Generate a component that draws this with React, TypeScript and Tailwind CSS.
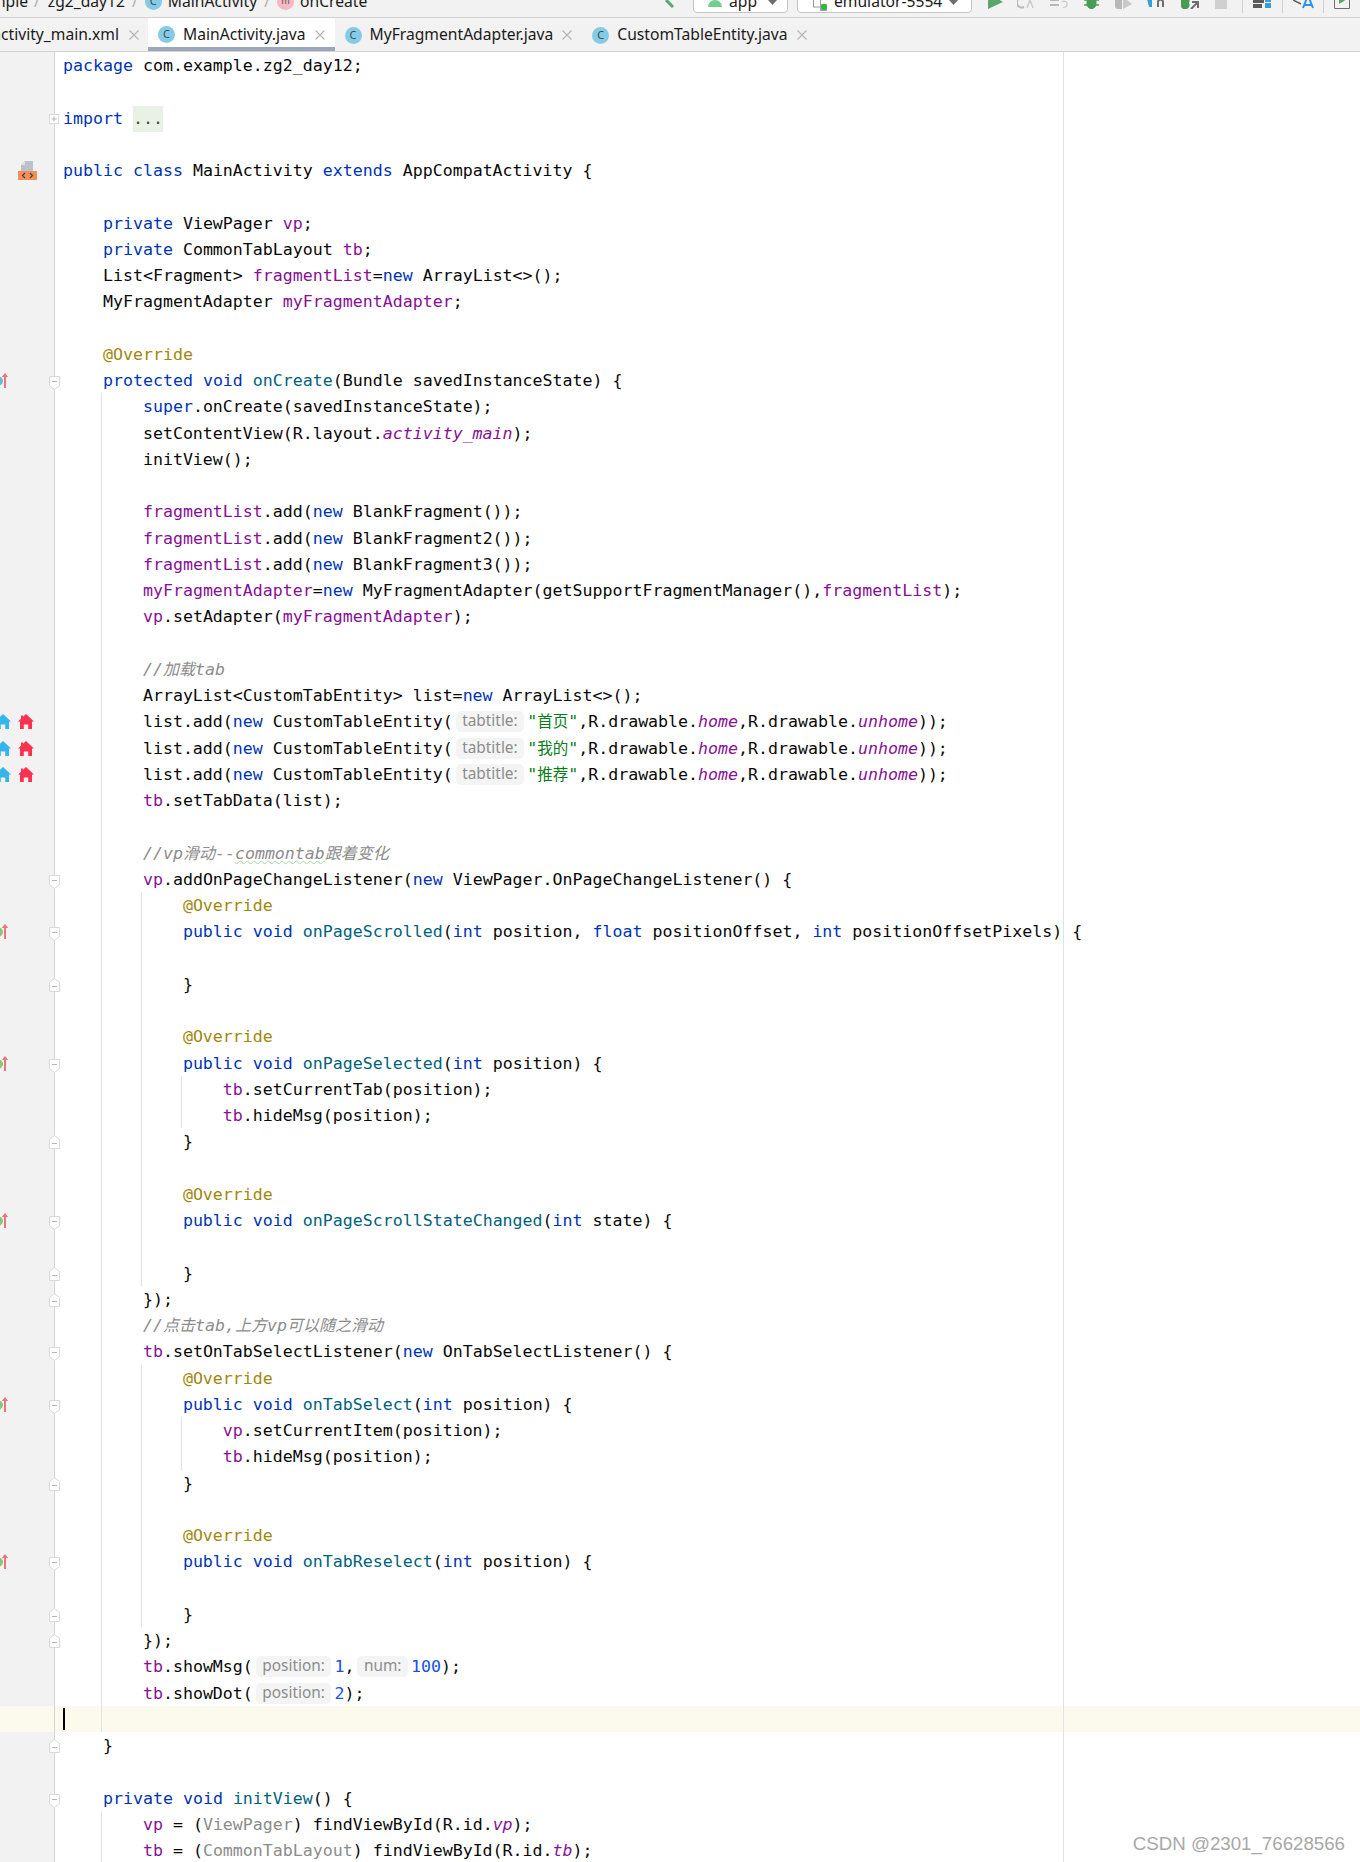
import React from "react";

const CODE: string[] = [
  "{k|package} com.example.zg2_day12;",
  "",
  "{k|import} {d|...}",
  "",
  "{k|public} {k|class} MainActivity {k|extends} AppCompatActivity {",
  "",
  "    {k|private} ViewPager {f|vp};",
  "    {k|private} CommonTabLayout {f|tb};",
  "    List<Fragment> {f|fragmentList}={k|new} ArrayList<>();",
  "    MyFragmentAdapter {f|myFragmentAdapter};",
  "",
  "    {a|@Override}",
  "    {k|protected} {k|void} {m|onCreate}(Bundle savedInstanceState) {",
  "        {k|super}.onCreate(savedInstanceState);",
  "        setContentView(R.layout.{fi|activity_main});",
  "        initView();",
  "",
  "        {f|fragmentList}.add({k|new} BlankFragment());",
  "        {f|fragmentList}.add({k|new} BlankFragment2());",
  "        {f|fragmentList}.add({k|new} BlankFragment3());",
  "        {f|myFragmentAdapter}={k|new} MyFragmentAdapter(getSupportFragmentManager(),{f|fragmentList});",
  "        {f|vp}.setAdapter({f|myFragmentAdapter});",
  "",
  "        {c|//}{cc|加载}{c|tab}",
  "        ArrayList<CustomTabEntity> list={k|new} ArrayList<>();",
  '        list.add({k|new} CustomTableEntity({h|tabtitle:}{s|"}{sc|首页}{s|"},R.drawable.{fi|home},R.drawable.{fi|unhome}));',
  '        list.add({k|new} CustomTableEntity({h|tabtitle:}{s|"}{sc|我的}{s|"},R.drawable.{fi|home},R.drawable.{fi|unhome}));',
  '        list.add({k|new} CustomTableEntity({h|tabtitle:}{s|"}{sc|推荐}{s|"},R.drawable.{fi|home},R.drawable.{fi|unhome}));',
  "        {f|tb}.setTabData(list);",
  "",
  "        {c|//vp}{cc|滑动}{c|--}{w|commontab}{cc|跟着变化}",
  "        {f|vp}.addOnPageChangeListener({k|new} ViewPager.OnPageChangeListener() {",
  "            {a|@Override}",
  "            {k|public} {k|void} {m|onPageScrolled}({k|int} position, {k|float} positionOffset, {k|int} positionOffsetPixels) {",
  "",
  "            }",
  "",
  "            {a|@Override}",
  "            {k|public} {k|void} {m|onPageSelected}({k|int} position) {",
  "                {f|tb}.setCurrentTab(position);",
  "                {f|tb}.hideMsg(position);",
  "            }",
  "",
  "            {a|@Override}",
  "            {k|public} {k|void} {m|onPageScrollStateChanged}({k|int} state) {",
  "",
  "            }",
  "        });",
  "        {c|//}{cc|点击}{c|tab,}{cc|上方}{c|vp}{cc|可以随之滑动}",
  "        {f|tb}.setOnTabSelectListener({k|new} OnTabSelectListener() {",
  "            {a|@Override}",
  "            {k|public} {k|void} {m|onTabSelect}({k|int} position) {",
  "                {f|vp}.setCurrentItem(position);",
  "                {f|tb}.hideMsg(position);",
  "            }",
  "",
  "            {a|@Override}",
  "            {k|public} {k|void} {m|onTabReselect}({k|int} position) {",
  "",
  "            }",
  "        });",
  "        {f|tb}.showMsg({h|position:}{n|1},{h|num:}{n|100});",
  "        {f|tb}.showDot({h|position:}{n|2});",
  "",
  "    }",
  "",
  "    {k|private} {k|void} {m|initView}() {",
  "        {f|vp} = ({g|ViewPager}) findViewById(R.id.{fi|vp});",
  "        {f|tb} = ({g|CommonTabLayout}) findViewById(R.id.{fi|tb});",
];

const FOLD_OPEN = [13, 32, 34, 39, 45, 50, 52, 58, 67];
const FOLD_END = [36, 42, 47, 48, 55, 60, 61, 65];
const OVERRIDE = [13, 34, 39, 45, 52, 58];
const HOME = [26, 27, 28];

function inRange(n: number, ranges: number[][]) {
  return ranges.some(([a, b]) => n >= a && n <= b);
}

function Token({ type, text }: { type: string; text: string }) {
  switch (type) {
    case "k":
      return <span className="text-[#0033b3]">{text}</span>;
    case "m":
      return <span className="text-[#00627a]">{text}</span>;
    case "f":
      return <span className="text-[#871094]">{text}</span>;
    case "fi":
      return <span className="text-[#871094] italic">{text}</span>;
    case "a":
      return <span className="text-[#9e880d]">{text}</span>;
    case "s":
      return <span className="text-[#067d17]">{text}</span>;
    case "sc":
      return <span className="text-[#067d17] text-[15.5px]">{text}</span>;
    case "n":
      return <span className="text-[#1750eb]">{text}</span>;
    case "c":
      return <span className="text-[#8c8c8c] italic">{text}</span>;
    case "cc":
      return <span className="text-[#8c8c8c] italic text-[16px]">{text}</span>;
    case "w":
      return (
        <span className="text-[#8c8c8c] italic underline decoration-wavy decoration-[#a9d5a9] decoration-1">{text}</span>
      );
    case "g":
      return <span className="text-[#8c8c8c]">{text}</span>;
    case "d":
      return <span className="inline-block bg-[#e8f2e4] text-[#444444] h-[26px]">{text}</span>;
    case "h":
      return (
        <span className="inline-block h-[21px] leading-[20px] align-[1px] mx-[3px] px-[6.5px] rounded-[5px] bg-[#f4f4f4] text-[#8c8c8c] text-[15.4px] font-['Noto_Sans',sans-serif]">
          {text}
        </span>
      );
    default:
      return <span>{text}</span>;
  }
}

function CodeText({ src }: { src: string }) {
  const parts = src.split(/(\{\w+\|[^}]*\})/g).filter(Boolean);
  return (
    <>
      {parts.map((p, i) => {
        const m = p.match(/^\{(\w+)\|([^}]*)\}$/);
        return m ? <Token key={i} type={m[1]} text={m[2]} /> : <span key={i}>{p}</span>;
      })}
    </>
  );
}

function FoldOpen() {
  return (
    <svg className="absolute -right-[6px] top-[9px] z-10" width="11" height="14" viewBox="0 0 11 14">
      <path d="M.5.5h10v9l-5 4-5-4z" fill="#fff" stroke="#d9d9d9" />
      <path d="M3 5.5h5" stroke="#b5b5b5" />
    </svg>
  );
}

function FoldEnd() {
  return (
    <svg className="absolute -right-[6px] top-[7px] z-10" width="11" height="14" viewBox="0 0 11 14">
      <path d="M.5 13.5h10v-9l-5-4-5 4z" fill="#fff" stroke="#d9d9d9" />
      <path d="M3 8.5h5" stroke="#b5b5b5" />
    </svg>
  );
}

function FoldPlus() {
  return (
    <svg className="absolute -right-[5px] top-[9px] z-10" width="10" height="10" viewBox="0 0 10 10">
      <rect x=".5" y=".5" width="9" height="9" fill="#fff" stroke="#d9d9d9" />
      <path d="M2.5 5h5M5 2.5v5" stroke="#b5b5b5" />
    </svg>
  );
}

function OverrideMark({ blue }: { blue: boolean }) {
  return (
    <svg className="absolute left-0 top-[6px]" width="10" height="16" viewBox="0 0 10 16">
      <circle cx="-1.5" cy="8" r="4.5" fill={blue ? "#6cb6d8" : "#8cc47a"} />
      <path d="M5 15V3" stroke="#e8767a" strokeWidth="2" />
      <path d="M5 0 1.8 4h6.4z" fill="#e8767a" />
    </svg>
  );
}

function House({ color, cls }: { color: string; cls: string }) {
  return (
    <svg className={cls} width="16" height="15" viewBox="0 0 16 15">
      <path d="M8 0 16 7.5h-2V15h-3.8v-4.5H5.8V15H2V7.5H0L3 4.7V1.5h2v1.3z" fill={color} />
    </svg>
  );
}

function LayoutMark() {
  return (
    <svg className="absolute left-[18px] top-[4px]" width="19" height="19" viewBox="0 0 19 19">
      <path d="M7 0h8v10H3V4z" fill="#b8c2c8" />
      <path d="M3 4h4V0z" fill="#dde2e5" />
      <rect y="10" width="19" height="9" fill="#f28f5c" />
      <path d="M7 12 4.5 14.5 7 17M12 12l2.5 2.5L12 17" fill="none" stroke="#5a3a2a" strokeWidth="1.2" />
    </svg>
  );
}

function GutterMarks({ n }: { n: number }) {
  return (
    <>
      {n === 5 && <LayoutMark />}
      {OVERRIDE.includes(n) && <OverrideMark blue={n === 13} />}
      {HOME.includes(n) && (
        <>
          <House color="#35b6ea" cls="absolute -left-[5px] top-[6px]" />
          <House color="#f9324f" cls="absolute left-[18px] top-[6px]" />
        </>
      )}
      {n === 3 && <FoldPlus />}
      {FOLD_OPEN.includes(n) && <FoldOpen />}
      {FOLD_END.includes(n) && <FoldEnd />}
    </>
  );
}

function Row({ n, src }: { n: number; src: string }) {
  const current = n === 64;
  const g1 = inRange(n, [[14, 64], [68, 69]]);
  const g2 = inRange(n, [[33, 47], [51, 60]]);
  const g3 = inRange(n, [[40, 41], [53, 54]]);
  return (
    <div className={current ? "flex h-[26.25px] bg-[#fcfaed]" : "flex h-[26.25px]"}>
      <div
        className={
          current
            ? "relative w-[55px] shrink-0 border-r border-[#d4d4d4]"
            : "relative w-[55px] shrink-0 border-r border-[#d4d4d4] bg-[#f2f2f2]"
        }
      >
        <GutterMarks n={n} />
      </div>
      <div className="relative flex-1 pl-[8px] pt-[1px] whitespace-pre leading-[26.25px]">
        {g1 && <div className="absolute left-[46px] top-0 bottom-0 w-px bg-[#e2e2e2]" />}
        {g2 && <div className="absolute left-[86px] top-0 bottom-0 w-px bg-[#e2e2e2]" />}
        {g3 && <div className="absolute left-[126px] top-0 bottom-0 w-px bg-[#e2e2e2]" />}
        {current && <div className="absolute left-[8px] top-[2px] h-[22px] w-[2px] bg-black" />}
        <span className="relative">
          <CodeText src={src} />
        </span>
      </div>
    </div>
  );
}

function FileIcon({ pink }: { pink?: boolean }) {
  return (
    <span
      className={
        pink
          ? "flex h-[17px] w-[17px] shrink-0 items-center justify-center rounded-full bg-[#f5b8c4] text-[9px] text-[#555555]"
          : "flex h-[17px] w-[17px] shrink-0 items-center justify-center rounded-full bg-[#85cbe6] text-[11px] text-[#3f4a50]"
      }
    >
      {pink ? "m" : "C"}
    </span>
  );
}

function Close() {
  return (
    <svg className="shrink-0" width="10" height="10" viewBox="0 0 10 10">
      <path d="M.5.5l9 9M9.5.5l-9 9" stroke="#b4b4b4" strokeWidth="1.1" />
    </svg>
  );
}

function Tab({ name, active }: { name: string; active?: boolean }) {
  return (
    <div
      className={
        active
          ? "flex h-full items-center bg-white border-b-[4px] border-[#9ca7bb] pl-[10px] pr-[10px] pt-[4px]"
          : "flex h-full items-center pl-[10px] pr-[10px] pt-[1px]"
      }
    >
      <FileIcon />
      <span className="ml-[8px] mr-[9px] text-[15.65px] text-[#1a1a1a] whitespace-nowrap">{name}</span>
      <Close />
    </div>
  );
}

function Sep() {
  return <span className="block mb-[4px] h-[14px] w-px bg-[#d0d0d0]" />;
}

function Toolbar() {
  return (
    <div className="flex h-[18px] items-end overflow-hidden border-b border-[#d1d1d1] bg-[#f2f2f2] font-['Noto_Sans',sans-serif] text-[15.65px] text-[#1a1a1a]">
      <div className="mb-[5px] flex h-[22px] w-[660px] shrink-0 items-center leading-[22px] whitespace-nowrap">
        <span className="w-[28px] overflow-hidden text-right">
          <span className="inline-block -ml-[20px]">mple</span>
        </span>
        <span className="ml-[6px] text-[#b0b0b0]">/</span>
        <span className="ml-[8px]">zg2_day12</span>
        <span className="ml-[7px] text-[#b0b0b0]">/</span>
        <span className="ml-[7px]">
          <FileIcon />
        </span>
        <span className="ml-[6px]">MainActivity</span>
        <span className="ml-[7px] text-[#b0b0b0]">/</span>
        <span className="ml-[7px]">
          <FileIcon pink />
        </span>
        <span className="ml-[6px]">onCreate</span>
      </div>
      <svg className="ml-[5px] mb-[9px] shrink-0" width="14" height="8" viewBox="0 0 14 8">
        <path d="M1 0l7 7" stroke="#59a869" strokeWidth="3" />
      </svg>
      <div className="ml-[14px] mb-[4px] flex h-[26px] w-[95px] shrink-0 items-end rounded-[4px] border border-[#c4c4c4] bg-white pl-[13px] pb-0 leading-[20px]">
        <svg className="mb-[5px]" width="16" height="7" viewBox="0 0 16 7">
          <path d="M1 7a7 7 0 0 1 14 0z" fill="#6fd08c" />
        </svg>
        <span className="ml-[6px] mb-[1px]">app</span>
        <svg className="ml-[11px] mb-[7px]" width="9" height="5" viewBox="0 0 9 5">
          <path d="M0 0h9L4.5 5z" fill="#6e6e6e" />
        </svg>
      </div>
      <div className="ml-[9px] mb-[4px] flex h-[26px] w-[175px] shrink-0 items-end rounded-[4px] border border-[#c4c4c4] bg-white pl-[15px] leading-[20px]">
        <svg className="mb-[1px]" width="15" height="12" viewBox="0 0 15 12">
          <rect x=".5" y="0" width="7" height="8" fill="none" stroke="#9a9a9a" />
          <rect x="7" y="5" width="7" height="7" fill="#a99bc8" />
          <circle cx="11" cy="8" r="3" fill="#22c322" />
        </svg>
        <span className="ml-[6px] mb-[1px]">emulator-5554</span>
        <svg className="ml-[7px] mb-[7px]" width="9" height="5" viewBox="0 0 9 5">
          <path d="M0 0h9L4.5 5z" fill="#6e6e6e" />
        </svg>
      </div>
      <div className="ml-[16px] mb-[8px] flex shrink-0 items-end">
        <svg width="15" height="12" viewBox="0 0 15 12">
          <path d="M0-4l15 9-15 7z" fill="#59a869" />
        </svg>
        <svg className="ml-[14px]" width="17" height="12" viewBox="0 0 17 12">
          <path d="M7 1a5 5 0 1 0 0 9" fill="none" stroke="#b8b8b8" strokeWidth="2" />
          <path d="M10 11l3-8 3 8" fill="none" stroke="#c8c8c8" strokeWidth="1.4" />
        </svg>
        <svg className="ml-[16px]" width="18" height="12" viewBox="0 0 18 12">
          <path d="M0 3h9M0 8h9" stroke="#b8b8b8" strokeWidth="2" />
          <path d="M12 5a3 3 0 1 1 1 5" fill="none" stroke="#c8c8c8" strokeWidth="1.2" />
        </svg>
        <svg className="ml-[16px]" width="15" height="12" viewBox="0 0 15 12">
          <path d="M7.5 0c3.5 0 5 2.500 5 6s-2 6-5 6-5-2.500-5-6 1.500-6 5-6z" fill="#499c54" />
          <path d="M0 3h15M0 8h15" stroke="#499c54" strokeWidth="1.4" />
        </svg>
        <svg className="ml-[16px]" width="17" height="12" viewBox="0 0 17 12">
          <path d="M3 0h4v12H3a3 3 0 0 1-3-3V3a3 3 0 0 1 3-3z" fill="#b8b8b8" />
          <path d="M8 0l9 7-9 5z" fill="#c8c8c8" />
        </svg>
        <svg className="ml-[15px]" width="18" height="10" viewBox="0 0 18 10">
          <path d="M0 0h5v8H2z" fill="#389fd6" />
          <path d="M11 8V3c0-3 5-3 5 0v5" fill="none" stroke="#6e6e6e" strokeWidth="2" />
        </svg>
        <svg className="ml-[16px]" width="18" height="12" viewBox="0 0 18 12">
          <path d="M4 0a4 4 0 0 1 4 6 4 4 0 0 1-4 6 4 4 0 0 1-4-6 4 4 0 0 1 4-6z" fill="#499c54" />
          <path d="M10 12l6-6M11 5h6v6" fill="none" stroke="#6e6e6e" strokeWidth="2" />
        </svg>
        <span className="ml-[16px] h-[11px] w-[12px] bg-[#d0d0d0]" />
      </div>
      <span className="ml-[15px] shrink-0 self-end">
        <Sep />
      </span>
      <svg className="ml-[10px] mb-[8px] shrink-0" width="18" height="12" viewBox="0 0 18 12">
        <path d="M0 0h11v6H0z" fill="#5a5a5a" />
        <path d="M0 7h9v4H0z" fill="#5a5a5a" />
        <path d="M12 0h6v5h-6zM12 6h6v5h-6z" fill="#389fd6" />
      </svg>
      <span className="ml-[11px] shrink-0 self-end">
        <Sep />
      </span>
      <svg className="ml-[10px] mb-[8px] shrink-0" width="21" height="12" viewBox="0 0 21 12">
        <path d="M0 3l8 4" stroke="#5a5a5a" strokeWidth="1.500" />
        <path d="M10 11l4-10h2l4 10M12 8h6" fill="none" stroke="#2a93e0" strokeWidth="2" />
      </svg>
      <span className="ml-[9px] shrink-0 self-end">
        <Sep />
      </span>
      <svg className="ml-[10px] mb-[8px] shrink-0" width="16" height="12" viewBox="0 0 16 12">
        <path d="M.5-2v13.500h15V-2" fill="none" stroke="#6e6e6e" />
        <path d="M5 0l6 3.500L5 7z" fill="#59a869" />
      </svg>
    </div>
  );
}

function Tabs() {
  return (
    <div className="flex h-[34px] items-stretch border-b border-[#d1d1d1] bg-[#f2f2f2] font-['Noto_Sans',sans-serif]">
      <div className="flex h-full w-[148px] shrink-0 items-center justify-end overflow-hidden pr-[9px] pt-[1px]">
        <span className="mr-[10px] text-[15.65px] text-[#1a1a1a] whitespace-nowrap">activity_main.xml</span>
        <Close />
      </div>
      <Tab name="MainActivity.java" active />
      <Tab name="MyFragmentAdapter.java" />
      <Tab name="CustomTableEntity.java" />
    </div>
  );
}

export default function App() {
  return (
    <div className="relative h-[1862px] w-[1360px] overflow-hidden bg-white">
      <Toolbar />
      <Tabs />
      <div className="relative font-['DejaVu_Sans_Mono','Noto_Sans_CJK_SC',monospace] text-[16.6px] text-[#080808]">
        <div className="absolute left-[1063px] top-0 bottom-0 z-0 w-px bg-[#e2e2e2]" />
        {CODE.map((src, i) => (
          <Row key={i} n={i + 1} src={src} />
        ))}
      </div>
      <div className="absolute right-[15px] bottom-[7px] font-['Liberation_Sans',sans-serif] text-[18.7px] leading-[22px] text-[#a8a8a8]">
        CSDN @2301_76628566
      </div>
    </div>
  );
}
